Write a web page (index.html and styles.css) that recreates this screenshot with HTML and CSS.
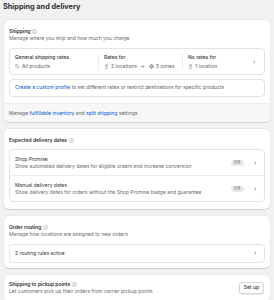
FILE: index.html
```
<!DOCTYPE html>
<html>
<head>
<meta charset="utf-8">
<link rel="stylesheet" href="styles.css">
</head>
<body>
<div class="page">
  <h1 class="title">Shipping and delivery</h1>

  <section class="card">
    <div class="card-body body-ship">
      <div class="head"><span class="h">Shipping</span><svg class="info" viewBox="0 0 10 10"><circle cx="5" cy="5" r="4.2" fill="none" stroke="#8a8a8a" stroke-width="0.9"/><rect x="4.55" y="4.3" width="0.9" height="3" fill="#8a8a8a"/><circle cx="5" cy="3" r="0.55" fill="#8a8a8a"/></svg></div>
      <p class="sub">Manage where you ship and how much you charge</p>
      <div class="box rates">
        <div class="col">
          <div class="lbl">General shipping rates</div>
          <div class="val"><svg class="ic" viewBox="0 0 10 10"><path d="M1.5 1.5h3.3l3.9 3.9-3.3 3.3-3.9-3.9z" fill="none" stroke="#5a5a5a" stroke-width="0.9" stroke-linejoin="round"/><circle cx="3.4" cy="3.4" r="0.6" fill="#5a5a5a"/></svg>All products</div>
        </div>
        <div class="col sep">
          <div class="lbl">Rates for</div>
          <div class="val"><svg class="ic" viewBox="0 0 10 10"><path d="M5 6.8C3.6 5.4 2.8 4.4 2.8 3.3a2.2 2.2 0 0 1 4.4 0c0 1.1-.8 2.1-2.2 3.5z" fill="none" stroke="#5a5a5a" stroke-width="0.9"/><circle cx="5" cy="3.3" r="0.7" fill="#5a5a5a"/><path d="M2.2 8.7h5.6" stroke="#5a5a5a" stroke-width="0.9"/></svg>2 locations<svg class="arrow" viewBox="0 0 10 10"><path d="M1.5 5h6.5M5.5 2.5 8 5 5.5 7.5" fill="none" stroke="#4a4a4a" stroke-width="0.9"/></svg><svg class="ic" viewBox="0 0 10 10"><circle cx="5" cy="5" r="3.8" fill="none" stroke="#5a5a5a" stroke-width="0.9"/><ellipse cx="5" cy="5" rx="1.6" ry="3.8" fill="none" stroke="#5a5a5a" stroke-width="0.8"/><path d="M1.2 5h7.6" stroke="#5a5a5a" stroke-width="0.8"/></svg>3 zones</div>
        </div>
        <div class="col sep">
          <div class="lbl">No rates for</div>
          <div class="val"><svg class="ic" viewBox="0 0 10 10"><path d="M5 6.8C3.6 5.4 2.8 4.4 2.8 3.3a2.2 2.2 0 0 1 4.4 0c0 1.1-.8 2.1-2.2 3.5z" fill="none" stroke="#5a5a5a" stroke-width="0.9"/><circle cx="5" cy="3.3" r="0.7" fill="#5a5a5a"/><path d="M2.2 8.7h5.6" stroke="#5a5a5a" stroke-width="0.9"/></svg>1 location</div>
        </div>
        <div class="chev-cell"><svg class="chev" viewBox="0 0 10 10"><path d="M4 2.5 6.5 5 4 7.5" fill="none" stroke="#616161" stroke-width="1"/></svg></div>
      </div>
      <div class="box linkbox"><a>Create a custom profile</a> to set different rates or restrict destinations for specific products</div>
    </div>
    <div class="card-foot">Manage <a>fulfillable inventory</a> and <a>split shipping</a> settings</div>
  </section>

  <section class="card">
    <div class="card-body body-dates">
      <div class="head"><span class="h">Expected delivery dates</span><svg class="info" viewBox="0 0 10 10"><circle cx="5" cy="5" r="4.2" fill="none" stroke="#8a8a8a" stroke-width="0.9"/><rect x="4.55" y="4.3" width="0.9" height="3" fill="#8a8a8a"/><circle cx="5" cy="3" r="0.55" fill="#8a8a8a"/></svg></div>
      <div class="box list">
        <div class="item">
          <div class="item-text">
            <div class="lbl2">Shop Promise</div>
            <div class="desc">Show automated delivery dates for eligible orders and increase conversion</div>
          </div>
          <span class="badge">Off</span>
          <svg class="chev" viewBox="0 0 10 10"><path d="M4 2.5 6.5 5 4 7.5" fill="none" stroke="#616161" stroke-width="1"/></svg>
        </div>
        <div class="item">
          <div class="item-text">
            <div class="lbl2">Manual delivery dates</div>
            <div class="desc">Show delivery dates for orders without the Shop Promise badge and guarantee</div>
          </div>
          <span class="badge">Off</span>
          <svg class="chev" viewBox="0 0 10 10"><path d="M4 2.5 6.5 5 4 7.5" fill="none" stroke="#616161" stroke-width="1"/></svg>
        </div>
      </div>
    </div>
  </section>

  <section class="card">
    <div class="card-body body-routing">
      <div class="head"><span class="h">Order routing</span><svg class="info" viewBox="0 0 10 10"><circle cx="5" cy="5" r="4.2" fill="none" stroke="#8a8a8a" stroke-width="0.9"/><rect x="4.55" y="4.3" width="0.9" height="3" fill="#8a8a8a"/><circle cx="5" cy="3" r="0.55" fill="#8a8a8a"/></svg></div>
      <p class="sub">Manage how locations are assigned to new orders</p>
      <div class="box single">
        <span>2 routing rules active</span>
        <svg class="chev" viewBox="0 0 10 10"><path d="M4 2.5 6.5 5 4 7.5" fill="none" stroke="#616161" stroke-width="1"/></svg>
      </div>
    </div>
  </section>

  <section class="card">
    <div class="card-body body-pickup">
      <div>
        <div class="head"><span class="h">Shipping to pickup points</span><svg class="info" viewBox="0 0 10 10"><circle cx="5" cy="5" r="4.2" fill="none" stroke="#8a8a8a" stroke-width="0.9"/><rect x="4.55" y="4.3" width="0.9" height="3" fill="#8a8a8a"/><circle cx="5" cy="3" r="0.55" fill="#8a8a8a"/></svg></div>
        <p class="sub">Let customers pick up their orders from carrier pickup points</p>
      </div>
      <button class="btn">Set up</button>
    </div>
  </section>
</div>
</body>
</html>
```

FILE: styles.css
```
* { box-sizing: border-box; margin: 0; padding: 0; }
body {
  background: #f1f1f1;
  font-family: Inter, "Noto Sans", sans-serif;
  color: #333333;
  font-size: 5px;
  line-height: 7px;
}
.page {
  padding: 2px 4px 6px 4px;
  display: flex;
  flex-direction: column;
  gap: 7px;
}
.title {
  font-size: 7.3px;
  line-height: 10px;
  font-weight: 700;
  color: #303030;
  margin-left: -1px;
  margin-bottom: 1px;
}
.card {
  background: #fff;
  border-radius: 5px;
  box-shadow: 0 1px 0 rgba(0,0,0,0.10), 0 0 0 0.5px rgba(0,0,0,0.06);
  overflow: hidden;
}
.card-body { padding: 8px 5px 6px 5px; }
.body-ship { padding-bottom: 6.5px; }
.body-dates { padding-bottom: 6.5px; }
.body-routing { padding-bottom: 5px; }
.body-pickup {
  padding-top: 6px;
  padding-bottom: 6.5px;
  display: flex;
  align-items: center;
  justify-content: space-between;
}
.head {
  display: flex;
  align-items: center;
  gap: 2px;
}
.h { font-weight: 600; color: #303030; }
.info { width: 5px; height: 5px; }
.sub { color: #6b6b6b; }
.box {
  border: 0.6px solid #e3e3e3;
  border-radius: 4px;
}
.rates {
  margin-top: 6px;
  display: grid;
  grid-template-columns: 88px 84px 1fr 20px;
  padding: 4.5px 0;
}
.col { padding: 0 5px; display: flex; flex-direction: column; gap: 2px; white-space: nowrap; }
.col.sep { border-left: 0.6px solid #ebebeb; }
.lbl { font-weight: 500; }
.lbl2 { font-weight: 400; }
.val { display: flex; align-items: center; color: #636363; }
.ic { width: 5px; height: 5px; margin-right: 2px; flex: none; }
.arrow { width: 5px; height: 5px; margin: 0 4px 0 3px; flex: none; }
.chev-cell { display: flex; align-items: center; justify-content: center; }
.chev { width: 6px; height: 6px; flex: none; }
.linkbox { margin-top: 3.5px; padding: 4.5px 5px; color: #636363; }
a { color: #005bd3; }
.card-foot {
  background: #f7f7f7;
  border-top: 0.6px solid #ebebeb;
  padding: 5.5px 5px;
  color: #636363;
}
.list { margin-top: 5px; }
.item {
  display: flex;
  align-items: center;
  padding: 5.5px 6.5px 5.5px 5px;
  gap: 4px;
}
.item + .item { border-top: 0.6px solid #ebebeb; }
.item-text { flex: 1; }
.desc { color: #6b6b6b; }
.badge {
  background: #e8e8e8;
  color: #616161;
  border-radius: 3px;
  padding: 0 3px;
  font-size: 4.4px;
  line-height: 6px;
  margin-right: 4px;
}
.single {
  margin-top: 6px;
  display: flex;
  justify-content: space-between;
  align-items: center;
  padding: 5px 6.5px 5px 5px;
}
.btn {
  font-family: inherit;
  font-size: 5px;
  line-height: 7px;
  font-weight: 500;
  color: #303030;
  background: #fff;
  border: 0.6px solid #d4d4d4;
  border-radius: 3px;
  padding: 1.5px 4px;
  box-shadow: 0 0.6px 0 rgba(0,0,0,0.12);
  margin-right: 1px;
}
```
